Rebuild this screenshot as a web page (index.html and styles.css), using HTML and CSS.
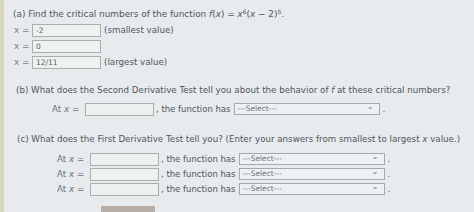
FILE: index.html
```html
<!DOCTYPE html>
<html lang="en">
<head>
  <meta charset="UTF-8">
  <title>Critical numbers</title>
  <link rel="stylesheet" href="styles.css">
</head>
<body>
  <div class="sheet">
    <p class="q q-a">(a) Find the critical numbers of the function <i>f</i>(<i>x</i>) = <i>x</i><sup>6</sup>(<i>x</i> &minus; 2)<sup>5</sup>.</p>
    <div class="row row-a"><span class="lbl">x =</span><span class="box">-2</span><span>(smallest value)</span></div>
    <div class="row row-a"><span class="lbl">x =</span><span class="box">0</span></div>
    <div class="row row-a"><span class="lbl">x =</span><span class="box">12/11</span><span>(largest value)</span></div>

    <p class="q q-b">(b) What does the Second Derivative Test tell you about the behavior of <i>f</i> at these critical numbers?</p>
    <div class="row row-b"><span class="at">At <i>x</i> =</span><span class="box"></span><span class="has">, the function has</span><span class="sel">---Select---<b>&#8964;</b></span><span>.</span></div>

    <p class="q q-c">(c) What does the First Derivative Test tell you? (Enter your answers from smallest to largest <i>x</i> value.)</p>
    <div class="row row-c"><span class="at">At <i>x</i> =</span><span class="box"></span><span class="has">, the function has</span><span class="sel">---Select---<b>&#8964;</b></span><span>.</span></div>
    <div class="row row-c"><span class="at">At <i>x</i> =</span><span class="box"></span><span class="has">, the function has</span><span class="sel">---Select---<b>&#8964;</b></span><span>.</span></div>
    <div class="row row-c"><span class="at">At <i>x</i> =</span><span class="box"></span><span class="has">, the function has</span><span class="sel">---Select---<b>&#8964;</b></span><span>.</span></div>

    <div class="btn"></div>
  </div>
</body>
</html>
```

FILE: styles.css
```css
html, body { margin: 0; height: 100%; }
body {
  font-family: "DejaVu Sans", Verdana, sans-serif;
  font-size: 8.7px;
  color: #4f565e;
  background: #e7ebee;
  border-left: 4px solid #d6d7b6;
  overflow: hidden;
}
.sheet { padding: 9px 0 0 9px; }
.q { margin: 0; line-height: 10px; white-space: nowrap; }
.q-a { font-size: 8.9px; }
sup { font-size: 6px; vertical-align: 3px; line-height: 0; }
.row { display: flex; align-items: center; height: 14px; white-space: nowrap; }
.row-a { margin-top: 2px; padding-left: 1px; }
.q-a + .row-a { margin-top: 4px; }
.row-a .lbl { width: 18px; color: #7b8288; }
.row-a .box { margin-right: 3px; }
.box {
  box-sizing: border-box;
  width: 69px;
  height: 13px;
  border: 1px solid #a9b1a6;
  background: #eef1f1;
  padding-left: 3px;
  line-height: 11px;
  font-size: 7.5px;
  color: #5a6168;
}
.q-b { margin-top: 16px; padding-left: 3px; }
.row-b { margin-top: 7px; padding-left: 39px; }
.q-c { margin-top: 18px; padding-left: 4px; }
.q-c + .row-c { margin-top: 8px; }
.row-c { margin-top: 1px; padding-left: 44px; }
.at { width: 33px; color: #6b7279; }
.has { padding: 0 3px 0 2px; font-size: 8.5px; }
.sel {
  box-sizing: border-box;
  display: flex;
  justify-content: space-between;
  width: 146px;
  height: 12px;
  border: 1px solid #a5aaae;
  background: #eef1f3;
  padding: 0 5px 0 3px;
  line-height: 10px;
  font-size: 7.5px;
  color: #6a7077;
  margin-right: 3px;
}
.sel b { font-weight: normal; font-size: 8px; line-height: 6px; }
.btn {
  margin: 10px 0 0 88px;
  width: 54px;
  height: 12px;
  background: #b9aea6;
}
```
